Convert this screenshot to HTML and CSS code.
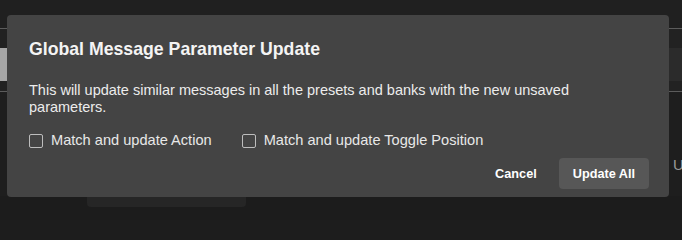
FILE: index.html
```html
<!DOCTYPE html>
<html>
<head>
<meta charset="utf-8">
<link rel="stylesheet" href="styles.css">
</head>
<body>
<div class="backdrop">
  <div class="bg-top"></div>
  <div class="bg-line"></div>
  <div class="bg-gap"></div>
  <div class="bg-row">
    <div class="bg-left-block"></div>
    <div class="bg-mid"></div>
    <div class="bg-right-block"></div>
  </div>
  <div class="bg-gap2"></div>
  <div class="bg-line"></div>
  <div class="bg-lower">
    <span class="bg-u">U</span>
  </div>
  <div class="bg-bottom-row">
    <div class="bg-pill"></div>
  </div>
</div>

<div class="dialog">
  <h1 class="title">Global Message Parameter Update</h1>
  <p class="desc">This will update similar messages in all the presets and banks with the new unsaved parameters.</p>
  <div class="options">
    <label class="opt"><span class="box"></span>Match and update Action</label>
    <label class="opt"><span class="box"></span>Match and update Toggle Position</label>
  </div>
  <div class="actions">
    <button class="btn btn-text">Cancel</button>
    <button class="btn btn-fill">Update All</button>
  </div>
</div>
</body>
</html>
```

FILE: styles.css
```css
html, body {
  margin: 0;
  padding: 0;
  background: #1d1d1d;
  width: 682px;
  height: 220px;
  overflow: hidden;
  font-family: "Liberation Sans", Arial, sans-serif;
}

.backdrop {
  display: flex;
  flex-direction: column;
  width: 682px;
  height: 220px;
}

.bg-top { height: 28px; background: #202020; }
.bg-line { height: 1px; background: #5c5c5c; }
.bg-gap { height: 19px; background: #222; }
.bg-row { height: 33px; display: flex; }
.bg-left-block { width: 8px; background: #a6a6a6; }
.bg-mid { flex: 1; background: #222; }
.bg-right-block { width: 14px; background: #2b2b2b; }
.bg-gap2 { height: 10px; background: #222; }
.bg-lower {
  height: 104px;
  background: #1e1e1e;
  display: flex;
  justify-content: flex-end;
  align-items: flex-start;
  overflow: hidden;
}
.bg-u {
  color: #9a9a9a;
  font-size: 15px;
  margin-top: 64px;
  margin-right: -1px;
  width: 10px;
  overflow: hidden;
}
.bg-bottom-row {
  flex: 1;
  background: #1c1c1c;
  padding-left: 87px;
}
.bg-pill {
  width: 159px;
  height: 11px;
  background: #262626;
  border-radius: 0 0 4px 4px;
}

.dialog {
  position: absolute;
  left: 7px;
  top: 15px;
  width: 662px;
  height: 182px;
  box-sizing: border-box;
  background: #444444;
  border-radius: 4px;
  padding: 24px 20px 0 22px;
  color: #fff;
  display: flex;
  flex-direction: column;
}

.title {
  margin: 0;
  font-size: 17.7px;
  font-weight: bold;
  line-height: 20px;
  color: #f4f4f4;
}

.desc {
  margin: 23px 0 0 0;
  max-width: 590px;
  font-size: 14.5px;
  line-height: 17px;
  color: #ececec;
}

.options {
  display: flex;
  gap: 30px;
  margin-top: 16px;
}

.opt {
  display: flex;
  align-items: center;
  font-size: 14.6px;
  line-height: 17px;
  color: #e8e8e8;
}

.box {
  width: 12px;
  height: 12px;
  border: 1px solid #bdbdbd;
  border-radius: 2px;
  margin-right: 8px;
  box-sizing: content-box;
}

.actions {
  display: flex;
  justify-content: flex-end;
  align-items: center;
  gap: 9px;
  margin-top: 9px;
  margin-right: 0;
}

.btn {
  font-family: "Liberation Sans", Arial, sans-serif;
  font-size: 12.7px;
  font-weight: bold;
  color: #fff;
  border: none;
  height: 31px;
  border-radius: 4px;
  padding: 0 15px;
}

.btn-text { background: transparent; padding: 0 13px; }
.btn-fill { background: #575757; padding: 0 14px; }
```
